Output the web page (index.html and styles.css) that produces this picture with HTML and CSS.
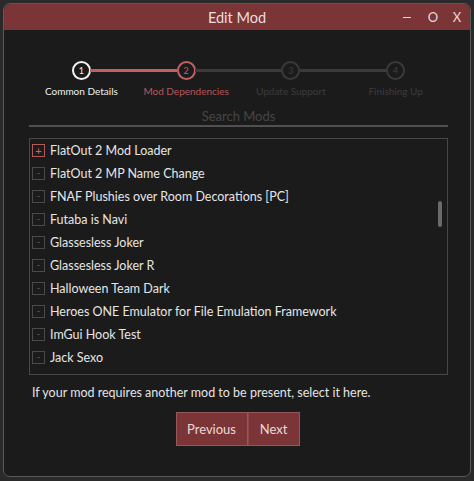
FILE: index.html
```html
<!DOCTYPE html>
<html>
<head>
<meta charset="utf-8">
<link rel="stylesheet" href="styles.css">
</head>
<body>
<div class="window">
  <div class="titlebar">
    <span class="title">Edit Mod</span>
    <div class="controls">
      <span class="ctl ctl-min"><span class="dash"></span></span>
      <span class="ctl ctl-max">O</span>
      <span class="ctl ctl-close">X</span>
    </div>
  </div>
  <div class="content">
    <div class="stepper">
      <div class="step done">
        <div class="circle">1</div>
        <div class="label">Common Details</div>
      </div>
      <div class="step current">
        <div class="circle">2</div>
        <div class="label">Mod Dependencies</div>
      </div>
      <div class="step todo">
        <div class="circle">3</div>
        <div class="label">Update Support</div>
      </div>
      <div class="step todo last">
        <div class="circle">4</div>
        <div class="label">Finishing Up</div>
      </div>
    </div>
    <div class="search">Search Mods</div>
    <div class="list">
      <div class="item"><span class="check focused">+</span><span class="name">FlatOut 2 Mod Loader</span></div>
      <div class="item"><span class="check"><i></i></span><span class="name">FlatOut 2 MP Name Change</span></div>
      <div class="item"><span class="check"><i></i></span><span class="name">FNAF Plushies over Room Decorations [PC]</span></div>
      <div class="item"><span class="check"><i></i></span><span class="name">Futaba is Navi</span></div>
      <div class="item"><span class="check"><i></i></span><span class="name">Glassesless Joker</span></div>
      <div class="item"><span class="check"><i></i></span><span class="name">Glassesless Joker R</span></div>
      <div class="item"><span class="check"><i></i></span><span class="name">Halloween Team Dark</span></div>
      <div class="item"><span class="check"><i></i></span><span class="name">Heroes ONE Emulator for File Emulation Framework</span></div>
      <div class="item"><span class="check"><i></i></span><span class="name">ImGui Hook Test</span></div>
      <div class="item"><span class="check"><i></i></span><span class="name">Jack Sexo</span></div>
      <div class="item"><span class="check"><i></i></span></div>
      <div class="thumb"></div>
    </div>
    <p class="help">If your mod requires another mod to be present, select it here.</p>
    <div class="buttons">
      <button class="btn btn-prev">Previous</button><button class="btn btn-next">Next</button>
    </div>
  </div>
</div>
</body>
</html>
```
FILE: styles.css
```css
* { box-sizing: border-box; }
html, body { margin: 0; padding: 0; }
body {
  width: 474px;
  height: 481px;
  background: #2a2a2a;
  padding: 3px 3px 4px 3px;
  font-family: Lato, "Open Sans", sans-serif;
  overflow: hidden;
}
.window {
  width: 468px;
  height: 474px;
  background: #1b1b1b;
  border: 1px solid #5a5a5a;
  border-radius: 7px;
  overflow: hidden;
  display: flex;
  flex-direction: column;
}
.titlebar {
  height: 26px;
  background: #7b3536;
  display: flex;
  align-items: center;
  justify-content: center;
  position: relative;
  flex: none;
}
.title {
  color: #ecdede;
  font-size: 14.5px;
}
.controls {
  position: absolute;
  right: 0;
  top: 0;
  height: 26px;
  display: flex;
  align-items: center;
}
.ctl {
  color: #e9d9d9;
  font-size: 13px;
  width: 26px;
  height: 26px;
  display: flex;
  align-items: center;
  justify-content: center;
}
.dash {
  display: block;
  width: 8px;
  height: 1.5px;
  background: #e9d9d9;
  margin-top: 1px;
}
.ctl-close { width: 22px; margin-right: 2px; }
.content {
  padding: 31px 21px 0 24px;
  display: flex;
  flex-direction: column;
}
.stepper {
  display: grid;
  grid-template-columns: repeat(4, 1fr);
  width: 419px;
  margin-left: 1px;
}
.step {
  position: relative;
  display: flex;
  flex-direction: column;
  align-items: center;
}
.step::after {
  content: "";
  position: absolute;
  top: 8px;
  left: calc(50% + 9px);
  width: calc(100% - 18px);
  height: 3px;
  background: #3a3a3d;
}
.step.done::after { background: #c26162; }
.step.last::after { display: none; }
.circle {
  width: 19px;
  height: 19px;
  border-radius: 50%;
  border: 2px solid #3a3a3d;
  display: flex;
  align-items: center;
  justify-content: center;
  font-size: 9px;
  color: #3f3f42;
}
.done .circle { border-color: #f2f2f2; color: #f2f2f2; }
.current .circle { border-color: #c26162; color: #c26162; }
.label {
  margin-top: 4px;
  font-size: 10px;
  line-height: 14px;
  color: #3c3c3e;
  white-space: nowrap;
}
.done .label { color: #f0f0f0; }
.current .label { color: #b8575a; }
.search {
  margin-top: 7px;
  margin-left: 1px;
  width: 419px;
  height: 22px;
  padding-top: 2px;
  border-bottom: 2px solid #505050;
  text-align: center;
  font-size: 13px;
  line-height: 19px;
  color: #464646;
}
.list {
  margin-top: 11px;
  margin-left: 1px;
  width: 419px;
  height: 237px;
  border: 1px solid #474747;
  overflow: hidden;
  position: relative;
}
.item {
  height: 23px;
  display: flex;
  align-items: center;
  padding-left: 2px;
}
.check {
  width: 13px;
  height: 13px;
  border: 1px solid #4a4a4a;
  margin-right: 5px;
  flex: none;
  display: flex;
  align-items: center;
  justify-content: center;
  color: #c06a6c;
  font-size: 11px;
  line-height: 1;
}
.check i {
  display: block;
  width: 3px;
  height: 1px;
  background: #454545;
}
.check.focused {
  border-color: #b05a5c;
}
.name {
  color: #e6e6e6;
  font-size: 12.5px;
  white-space: nowrap;
}
.thumb {
  position: absolute;
  right: 5px;
  top: 62px;
  width: 4px;
  height: 26px;
  border-radius: 2px;
  background: #6a6a6a;
}
.help {
  margin: 10px 0 0 4px;
  color: #e4e4e4;
  font-size: 12.5px;
  line-height: 16px;
}
.buttons {
  margin-top: 11px;
  display: flex;
  justify-content: center;
  padding-right: 2px;
}
.btn {
  font-family: inherit;
  height: 34px;
  background: #7b3536;
  border: 1px solid #96585a;
  color: #ead9d9;
  font-size: 13px;
  padding: 0;
  margin: 0;
}
.btn-prev { width: 72px; }
.btn-next { width: 52px; border-left: 1px solid #8a4a4c; }
```
